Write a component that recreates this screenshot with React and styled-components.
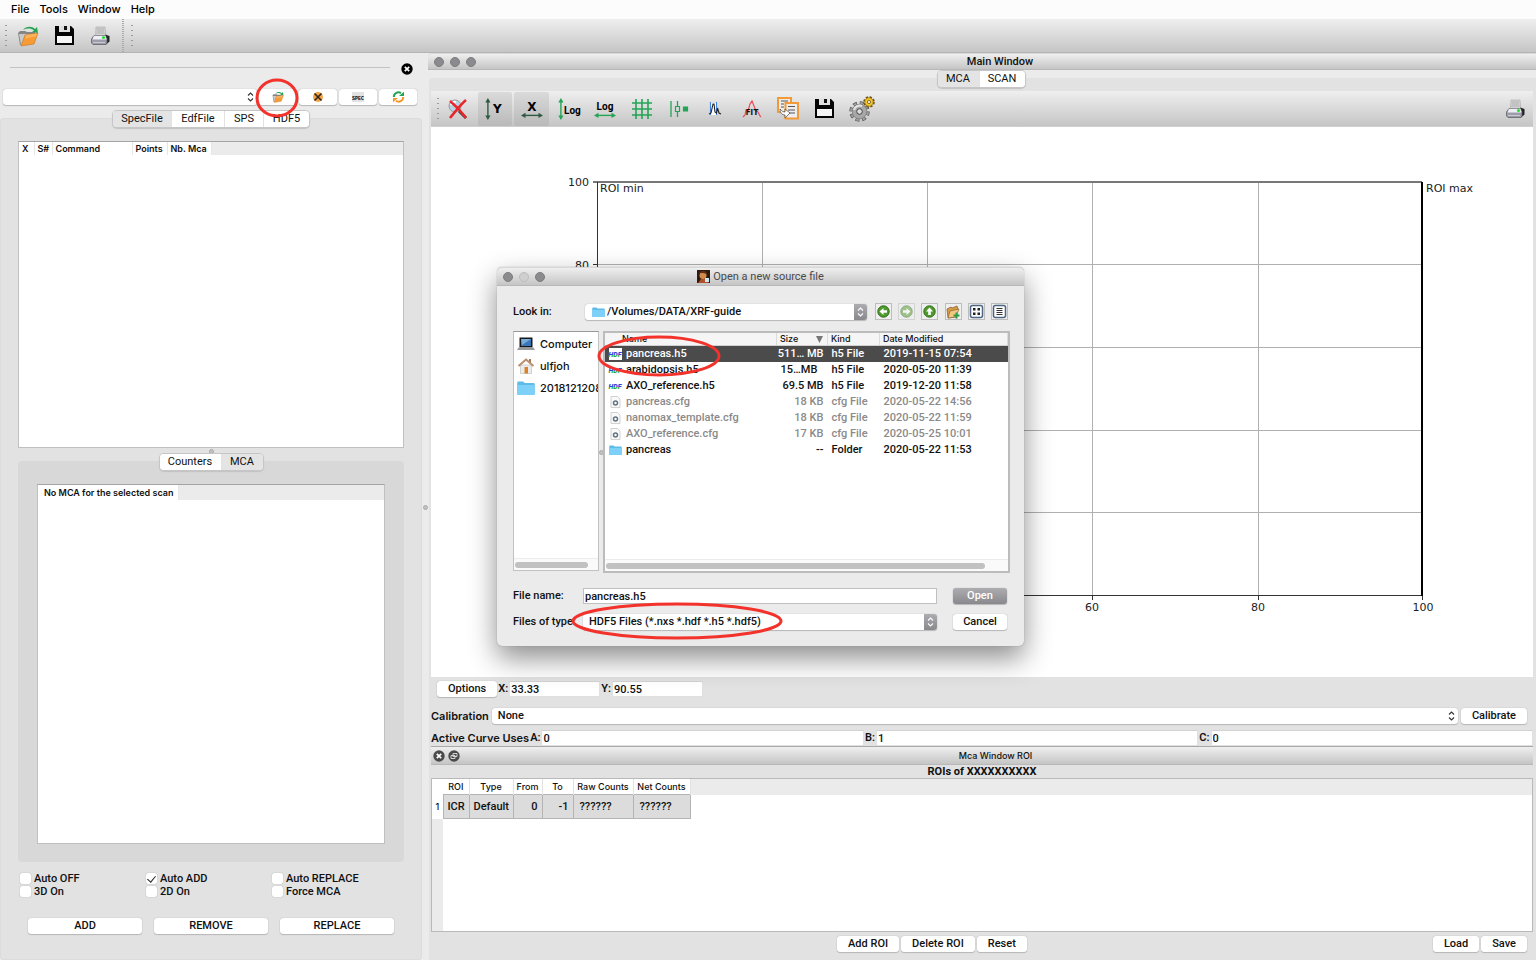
import { useState } from "react";
import styled, { createGlobalStyle, css } from "styled-components";

const GlobalStyle = createGlobalStyle`
  * {
    box-sizing: border-box;
  }
  body {
    margin: 0;
    background: #ebebeb;
    color: #111;
    font-family: Roboto, "Liberation Sans", sans-serif;
    font-size: 11px;
    font-weight: 500;
    line-height: 16px;
  }
  button, input, select {
    margin: 0;
    padding: 0;
    border: 0;
    color: inherit;
    font: inherit;
  }
  svg {
    display: block;
    flex: none;
    overflow: visible;
  }
  table {
    border-collapse: collapse;
    border-spacing: 0;
  }
`;

const wideFont = css`
  font-family: Inter, "Liberation Sans", sans-serif;
`;

const Page = styled.div`
  position: relative;
  display: flex;
  flex-direction: column;
  min-height: 100vh;
  overflow: hidden;
`;

const MenuBar = styled.nav`
  ${wideFont}
  display: flex;
  gap: 10px;
  height: 19px;
  padding: 1px 11px;
  background: #fcfcfc;
`;

const MenuLink = styled.a`
  color: #000;
  text-decoration: none;
`;

const barGradient = css`
  background: linear-gradient(#efefef, #c5c5c5);
`;

const AppToolbar = styled.div`
  ${barGradient}
  display: flex;
  align-items: center;
  height: 34px;
  padding-left: 5px;
  border-bottom: 1px solid #b4b4b4;
`;

const Grip = styled.span`
  width: 2px;
  height: 22px;
  margin-right: ${(props) => props.$gap || 0}px;
  background: repeating-linear-gradient(#999 0 1px, transparent 1px 5px);
`;

const BarEdge = styled.span`
  width: 2px;
  height: 34px;
  margin: 0 7px 0 4px;
  background: repeating-linear-gradient(#aaa 0 1px, transparent 1px 2px);
`;

const IconButton = styled.button`
  display: grid;
  place-items: center;
  width: 36px;
  height: 30px;
  background: none;
`;

const Workspace = styled.div`
  display: flex;
  flex: 1;
`;

/* ---- shared controls ---- */

const PushButton = styled.button`
  height: 16px;
  padding: 0 11px;
  border-radius: 3px;
  background: ${(props) => (props.$primary ? "linear-gradient(#adadb1, #88888d)" : "#fff")};
  color: ${(props) => (props.$primary ? "#fff" : "inherit")};
  box-shadow: 0 0 1px #999, 0 1px 1px #bbb;
  line-height: 16px;
  white-space: nowrap;
`;

const TabStrip = styled.div`
  position: relative;
  display: flex;
  align-self: center;
  height: 16px;
  margin-bottom: -9px;
  border-radius: 4px;
  background: #fff;
  box-shadow: 0 0 0 1px #c6c6c6, 0 1px 1px 1px #c2c2c2;
  overflow: hidden;
`;

const Tab = styled.button`
  width: ${(props) => props.$width}px;
  background: ${(props) => (props.$selected ? "#e4e4e4" : "#fff")};
  font-weight: 400;
  line-height: 16px;
  text-align: center;

  & + & {
    border-left: 1px solid #e2e2e2;
  }
`;

const SelectBox = styled.div`
  display: grid;
  flex: 1;
  align-items: center;
  min-width: 0;
  height: 16px;
  border-radius: 3px;
  background: #fff;
  box-shadow: 0 0 1px #999, 0 1px 1px #bbb;
  overflow: hidden;

  & > * {
    grid-area: 1 / 1;
  }
`;

const NativeSelect = styled.select`
  width: 100%;
  height: 16px;
  padding-left: ${(props) => props.$indent || 6}px;
  background: none;
  appearance: none;
  outline: none;
`;

const SelectIcon = styled.span`
  justify-self: start;
  margin-left: 7px;
  pointer-events: none;
`;

const SelectArrows = styled.span`
  display: grid;
  place-items: center;
  justify-self: end;
  width: 13px;
  height: 16px;
  background: ${(props) => (props.$solid ? "linear-gradient(#adadb1, #88888d)" : "none")};
  color: ${(props) => (props.$solid ? "#fff" : "#333")};
  pointer-events: none;
`;

const TextField = styled.input`
  flex: ${(props) => (props.$width ? "none" : 1)};
  width: ${(props) => (props.$width ? props.$width + "px" : "auto")};
  min-width: 0;
  height: 16px;
  padding: 1px 1px 0;
  border: 1px solid ${(props) => props.$border || "#e0e0e0"};
  border-top-color: ${(props) => props.$border || "#d2d2d2"};
  background: #fff;
  outline: none;
`;

/* ---- left dock ---- */

const Dock = styled.aside`
  display: flex;
  flex: 0 0 422px;
  flex-direction: column;
`;

const DockTitle = styled.div`
  display: flex;
  align-items: center;
  gap: 11px;
  height: 32px;
  padding: 0 9px 0 10px;
`;

const DockRule = styled.hr`
  flex: 1;
  height: 1px;
  margin: 0 0 3px;
  border: 0;
  background: #c4c4c4;
`;

const RoundButton = styled.button`
  border-radius: 50%;
  background: none;
`;

const SourceRow = styled.div`
  display: flex;
  gap: 2px;
  margin: 4px 5px 6px 3px;
`;

const SourceButton = styled.button`
  display: grid;
  place-items: center;
  width: 38px;
  height: 16px;
  border-radius: 3px;
  background: #fff;
  box-shadow: 0 0 1px #999, 0 1px 1px #bbb;
`;

const SourcePanel = styled.div`
  display: flex;
  flex: 1;
  flex-direction: column;
  margin-bottom: 1px;
  padding: 23px 18px 26px;
  border-radius: 4px;
  background: #e2e2e2;
  box-shadow: inset 0 0 0 1px #dcdcdc;
`;

const ListBox = styled.div`
  flex: ${(props) => props.$flex || 1};
  border: 1px solid #c0c0c0;
  border-top-color: #a4a4a4;
  background: linear-gradient(#ebebeb ${(props) => props.$head}px, #fff ${(props) => props.$head}px);
`;

const HeadTable = styled.table`
  ${wideFont}
  table-layout: fixed;
  background: #fff;
  font-size: 9px;
  font-weight: 600;
  line-height: ${(props) => props.$height}px;

  th {
    padding: 0 0 0 ${(props) => props.$indent || 3}px;
    border-right: 1px solid #e6e6e6;
    font-weight: inherit;
    text-align: left;
  }
`;

const SplitDot = styled.span`
  align-self: center;
  width: 5px;
  height: 5px;
  flex: none;
  border: 1px solid #a9a9a9;
  border-radius: 50%;
  background: #c2c2c2;
`;

const PaneHandle = styled.div`
  display: flex;
  justify-content: center;
  height: 6px;
`;

const CounterPanel = styled.div`
  display: flex;
  flex: 400 1 400px;
  padding: 23px 19px 18px;
  border-radius: 4px;
  background: #d8d8d8;
`;

const CheckGrid = styled.div`
  display: grid;
  grid-template-columns: repeat(3, 1fr);
  margin: 10px 6px 20px 2px;
  line-height: 13px;
`;

const CheckLabel = styled.label`
  display: flex;
  align-items: center;
  gap: 3px;
`;

const CheckInput = styled.input`
  display: grid;
  place-items: center;
  width: 11px;
  height: 11px;
  border-radius: 2px;
  background: #fff;
  box-shadow: 0 0 1px #888;
  appearance: none;

  &:checked::after {
    content: "";
    width: 4px;
    height: 7px;
    margin-top: -1px;
    border: solid #222;
    border-width: 0 1px 1px 0;
    transform: rotate(40deg);
  }
`;

const ActionRow = styled.div`
  display: grid;
  grid-template-columns: repeat(3, 1fr);
  gap: 12px;
  padding: 0 10px;
`;

const Splitter = styled.div`
  display: flex;
  flex: 0 0 6px;
  justify-content: center;
`;

/* ---- main window ---- */

const MainWindow = styled.main`
  display: flex;
  flex: 1;
  flex-direction: column;
  min-width: 0;
`;

const TitleBar = styled.header`
  ${barGradient}
  display: grid;
  grid-template-columns: ${(props) => (props.$dialog ? "1fr auto 1fr" : "auto 1fr")};
  align-items: center;
  height: ${(props) => (props.$dialog ? 19 : 17)}px;
  padding: 0 ${(props) => (props.$dialog ? 6 : 12)}px 0 6px;
  border-top: 1px solid #d8d8d8;
  border-bottom: 1px solid #b8b8b8;
  border-radius: ${(props) => (props.$dialog ? "5px 5px 0 0" : "4px 0 0 0")};
  text-align: center;
`;

const Lights = styled.div`
  display: flex;
  gap: 6px;
`;

const Light = styled.button`
  width: 10px;
  height: 10px;
  border-radius: 50%;
  border: 1px solid ${(props) => (props.$off ? "#bdbdbd" : "#7d7d80")};
  background: ${(props) => (props.$off ? "#cfcfcf" : "#8b8b8f")};
`;

const WindowName = styled.h1`
  margin: 0;
  font-size: 11px;
  font-weight: 500;
  line-height: 15px;
`;

const MainTabs = styled.div`
  display: flex;
  justify-content: center;
  padding: 1px 2px 0 0;
`;

const MainPanel = styled.div`
  display: flex;
  flex: 1;
  flex-direction: column;
  margin-left: 1px;
  padding: 13px 3px 9px 2px;
  border-radius: 4px 0 0 0;
  background: #e2e2e2;
`;

const PlotToolbar = styled.div`
  ${barGradient}
  display: flex;
  align-items: center;
  height: 36px;
  padding-left: 6px;
  border-bottom: 1px solid #cfcfcf;
`;

const PlotTools = styled.div`
  display: grid;
  grid-template-columns: repeat(12, 1fr);
  width: 440px;
  margin-right: auto;
`;

const PlotTool = styled.button`
  display: grid;
  place-items: center;
  height: 34px;
  margin: 0 1px;
  border-radius: 2px;
  background: ${(props) => (props.$on ? "linear-gradient(#dadada, #b9b9b9)" : "none")};
`;

const PlotArea = styled.div`
  flex: 1;
  background: #fff;

  svg {
    width: 100%;
    height: auto;
  }
`;

const FormRow = styled.div`
  display: flex;
  align-items: center;
  gap: ${(props) => props.$gap || 1}px;
  height: 16px;
  margin-top: ${(props) => props.$top}px;
  padding: 0 ${(props) => props.$right || 0}px 0 ${(props) => props.$left || 0}px;
`;

const FieldLabel = styled.label`
  font-weight: 600;
  white-space: nowrap;
`;

const StrongLabel = styled(FieldLabel)`
  ${wideFont}
`;

const RoiTitle = styled.header`
  ${barGradient}
  ${wideFont}
  display: grid;
  grid-template-columns: auto 1fr;
  align-items: center;
  height: 19px;
  border-top: 1px solid #a8a8a8;
  border-bottom: 1px solid #b8b8b8;
  padding: 0 2px;
  font-size: 9px;
  text-align: center;
`;

const RoundPair = styled.div`
  display: flex;
  gap: 3px;
`;

const RoiHeading = styled.h2`
  margin: 0;
  font-size: 11px;
  font-weight: 700;
  line-height: 13px;
  text-align: center;
`;

const RoiBox = styled.div`
  height: 154px;
  border: 1px solid #b9b9b9;
  background: linear-gradient(#ebebeb 16px, transparent 16px), linear-gradient(90deg, #ebebeb 11px, #fff 11px);
`;

const RoiTable = styled.table`
  table-layout: fixed;
  width: 258px;
  background: #fff;

  th {
    ${wideFont}
    height: 15px;
    padding: 0;
    font-size: 9px;
    font-weight: 500;
    line-height: 15px;
  }
  thead th + th {
    border-right: 1px solid #e2e2e2;
  }
  td {
    height: 24px;
    padding: 0 4px;
    border: 1px solid #b4b4b4;
    background: #dcdcdc;
  }
`;

const NumberCell = styled.td`
  && {
    text-align: right;
  }
`;

const CountCell = styled.td`
  && {
    padding-left: 6px;
  }
`;

const RoiActions = styled.div`
  display: flex;
  justify-content: space-between;
  margin-top: 4px;
  padding-right: 6px;
`;

const ButtonGroup = styled.div`
  display: flex;
  gap: 2px;
  margin: ${(props) => (props.$center ? "0 auto" : "0")};
`;

/* ---- file dialog ---- */

const Dialog = styled.section`
  position: absolute;
  top: 267px;
  left: 497px;
  width: 527px;
  border-radius: 5px;
  background: #ebebeb;
  box-shadow: 0 0 1px #777, 0 12px 28px rgba(0, 0, 0, 0.45);
`;

const DialogTitle = styled.div`
  display: flex;
  align-items: center;
  gap: 3px;
  color: #4a4a4a;
  font-weight: 400;
`;

const DialogBody = styled.div`
  padding: 17px 14px 16px 16px;
`;

const LookRow = styled.div`
  display: grid;
  grid-template-columns: 72px 282px 1fr;
  align-items: center;
  height: 17px;
`;

const NavButtons = styled.div`
  display: flex;
  justify-content: space-between;
  padding: 0 2px 0 8px;
`;

const NavButton = styled.button`
  display: grid;
  place-items: center;
  width: 17px;
  height: 17px;
  border: 1px solid #bdbdbd;
  background: #efefef;

  &:disabled {
    opacity: 0.5;
  }
`;

const Browser = styled.div`
  display: flex;
  height: 242px;
  margin: 11px 0 15px;
`;

const Places = styled.ul`
  ${wideFont}
  display: flex;
  flex-direction: column;
  width: 86px;
  height: 240px;
  margin: 0;
  padding: 1px 0 0;
  border: 1px solid #c2c2c2;
  border-top-color: #999;
  background: #fff;
  list-style: none;
  overflow: hidden;
`;

const Place = styled.li`
  display: flex;
  align-items: center;
  gap: 5px;
  height: 22px;
  padding-left: 3px;
  white-space: nowrap;
`;

const BrowserGap = styled.div`
  display: flex;
  width: 4px;
  flex: none;
  justify-content: center;
`;

const FileBox = styled.div`
  display: flex;
  flex: 1;
  flex-direction: column;
  min-width: 0;
  border: 2px solid #bcbcbc;
  background: #fff;
`;

const ScrollTrack = styled.div`
  height: 12px;
  margin-top: auto;
  padding: 3px 1px;
  border-top: 1px solid #ececec;
  background: #fafafa;
`;

const ScrollThumb = styled.div`
  width: ${(props) => props.$width}px;
  height: 6px;
  border-radius: 3px;
  background: #c1c1c1;
`;

const FileTable = styled.table`
  table-layout: fixed;
  width: 100%;

  th {
    ${wideFont}
    height: 12px;
    padding: 0 0 0 3px;
    border-right: 1px solid #dcdcdc;
    border-bottom: 1px solid #d0d0d0;
    background: #f5f5f5;
    font-size: 9px;
    font-weight: 500;
    line-height: 12px;
    text-align: left;
  }
  th:first-child {
    padding-left: 17px;
  }
  td {
    height: 16px;
    padding: 0 0 0 4px;
    line-height: 16px;
    white-space: nowrap;
  }
`;

const FileRow = styled.tr`
  background: ${(props) => (props.$selected ? "#4b4b4b" : "transparent")};
  color: ${(props) => (props.$selected ? "#fff" : props.$dim ? "#8a8a8a" : "#111")};
`;

const FileName = styled.span`
  display: flex;
  align-items: center;
  gap: 4px;
`;

const SizeHead = styled.span`
  display: flex;
  align-items: center;
  justify-content: space-between;
  padding-right: 4px;
`;

const SizeCell = styled.td`
  && {
    padding: 0 4px 0 ${(props) => (props.$left ? 4 : 0)}px;
    text-align: ${(props) => (props.$left ? "left" : "right")};
  }
`;

const DialogForm = styled.div`
  display: grid;
  grid-template-columns: 70px 354px 54px;
  align-items: center;
  gap: 10px 0;
`;

const FormControl = styled.div`
  display: flex;
`;

const DialogButton = styled(PushButton)`
  width: 54px;
  margin-left: 16px;
  padding: 0;
`;

/* hand-drawn ring laid over the controls */
const Ring = styled.svg`
  position: absolute;
  top: ${(props) => props.$top}px;
  left: ${(props) => props.$left}px;
  fill: none;
  stroke: #f2322b;
  stroke-width: 3;
  pointer-events: none;
`;

/* ---- icons ---- */

const FolderOpenIcon = ({ size = 22 }) => (
  <svg width={size} height={size} viewBox="0 0 22 22">
    <path d="M1 8l2-2h5l2 1h8v3L6 20H3z" fill="#858585" />
    <path d="M2 9h14v4l-9 7H4z" fill="#c9c9c9" />
    <path d="M8 10l13-2-4 11-13 2z" fill="#f79b35" stroke="#c7741c" strokeWidth=".6" />
    <path d="M9 10l11-1.600-1 3-11 2z" fill="#fdb25c" />
    <path d="M6 5c3-4 9-4 12-1l2-2 1 6-6-1 2-1.500C14 3 10 3 6 5z" fill="#25a456" />
  </svg>
);

const FloppyIcon = () => (
  <svg width="19" height="19" viewBox="0 0 19 19">
    <path d="M0 0h4v6h11V0h1l3 3v16H0z" fill="#050505" />
    <path d="M6 0h7v4H6z" fill="#ddd" />
    <path d="M9 0h3v4H9z" fill="#111" />
    <path d="M2 10h15v7H2z" fill="#f6f6f6" />
  </svg>
);

const PrinterIcon = () => (
  <svg width="19" height="20" viewBox="0 0 19 20">
    <path d="M5 1h9l1 9H4.500z" fill="#d2d2d2" stroke="#aaa" strokeWidth=".6" />
    <path d="M6 3h7M6 5h7M5.500 7h8" stroke="#aaa" strokeWidth=".8" />
    <path d="M14 8.500l4.500 1.500v5.500L15 18.500z" fill="#222" />
    <path d="M3 9.500h11.500l1.500 3v4.500l-1 1.500H2L.5 17v-4z" fill="#9d9daa" stroke="#55555f" strokeWidth=".7" />
    <path d="M3 9.800h11.500l1 3.700h-14z" fill="#eeeef5" />
    <path d="M2 16.500h12" stroke="#c8c8d4" />
    <circle cx="12.500" cy="11.500" r="1.600" fill="#28e038" />
  </svg>
);

const CloseIcon = ({ fill = "#000" }) => (
  <svg width="12" height="12" viewBox="0 0 12 12">
    <circle cx="6" cy="6" r="5.700" fill={fill} />
    <path d="M3.800 3.800l4.400 4.400M8.200 3.800l-4.400 4.400" stroke="#fff" strokeWidth="1.700" />
  </svg>
);

const FloatIcon = () => (
  <svg width="12" height="12" viewBox="0 0 12 12">
    <circle cx="6" cy="6" r="5.700" fill="#4a4a4a" />
    <path d="M5 3.500h4v3H5zM3 5.500h4v3H3z" fill="#4a4a4a" stroke="#ddd" strokeWidth=".9" />
  </svg>
);

const ArrowsIcon = () => (
  <svg width="7" height="10" viewBox="0 0 7 10" fill="none" stroke="currentColor" strokeWidth="1.100">
    <path d="M1 3.500L3.500 1 6 3.500M1 6.500L3.500 9 6 6.500" />
  </svg>
);

const SortIcon = () => (
  <svg width="7" height="7" viewBox="0 0 7 7" fill="#777">
    <path d="M0 0h7L3.500 7z" />
  </svg>
);

const RemoveSourceIcon = () => (
  <svg width="12" height="12" viewBox="0 0 12 12">
    <circle cx="6" cy="6" r="5" fill="#f5a243" />
    <path d="M2.500 2.500l7 7M9.500 2.500l-7 7" stroke="#33281c" strokeWidth="1.700" />
  </svg>
);

const SpecIcon = () => (
  <svg width="14" height="11" viewBox="0 0 14 11">
    <path d="M1 0h12v10H1z" fill="#e2e2e2" />
    <text x="7" y="7.500" textAnchor="middle" fontFamily="Liberation Mono, monospace" fontSize="5" fontWeight="700">SPEC</text>
  </svg>
);

const RefreshIcon = () => (
  <svg width="13" height="12" viewBox="0 0 13 12" fill="none" strokeWidth="2">
    <path d="M1.800 6A4.600 4.600 0 0 1 9 2.200" stroke="#22a455" />
    <path d="M7 5h5V.8z" fill="#22a455" />
    <path d="M11.200 6A4.600 4.600 0 0 1 4 9.800" stroke="#f5962a" />
    <path d="M6 7H1v4.200z" fill="#f5962a" />
  </svg>
);

const ZoomResetIcon = () => (
  <svg width="22" height="22" viewBox="0 0 22 22">
    <circle cx="8" cy="8" r="6" fill="#b9d3e4" stroke="#999" />
    <path d="M4 7a4 4 0 0 1 5-3" stroke="#fff" strokeWidth="2" fill="none" />
    <path d="M12 13l7 7" stroke="#444" strokeWidth="3" />
    <path d="M3 20C8 14 13 7 19 2M3 3c5 4 11 10 16 17" stroke="#e8262b" strokeWidth="2.500" fill="none" />
  </svg>
);

const VerticalArrow = ({ color }) => (
  <g fill={color}>
    <path d="M4.200 3h1.400v18H4.200z" />
    <path d="M4.900 1l2.600 4.500H2.300zM4.900 23l2.600-4.500H2.300z" />
  </g>
);

const HorizontalArrow = ({ color }) => (
  <g fill={color}>
    <path d="M4 17.700h16v1.400H4z" />
    <path d="M1 18.400l4.500-2.600V21zM23 18.400l-4.500-2.600V21z" />
  </g>
);

const YScaleIcon = () => (
  <svg width="24" height="24" viewBox="0 0 24 24">
    <VerticalArrow color="#2d5a42" />
    <text x="10" y="16" fontFamily="DejaVu Sans" fontSize="12" fontWeight="700">Y</text>
  </svg>
);

const XScaleIcon = () => (
  <svg width="24" height="24" viewBox="0 0 24 24">
    <HorizontalArrow color="#2d5a42" />
    <text x="12" y="14" textAnchor="middle" fontFamily="DejaVu Sans" fontSize="12" fontWeight="700">X</text>
  </svg>
);

const YLogIcon = () => (
  <svg width="24" height="24" viewBox="0 0 24 24">
    <VerticalArrow color="#25a456" />
    <text x="8" y="17" fontFamily="Roboto" fontSize="10" fontWeight="700">Log</text>
  </svg>
);

const XLogIcon = () => (
  <svg width="24" height="24" viewBox="0 0 24 24">
    <HorizontalArrow color="#25a456" />
    <text x="12" y="13" textAnchor="middle" fontFamily="Roboto" fontSize="10" fontWeight="700">Log</text>
  </svg>
);

const GridIcon = () => (
  <svg width="20" height="20" viewBox="0 0 20 20" stroke="#25a456" strokeWidth="1.600">
    <path d="M4 0v20M10 0v20M16 0v20M0 4h20M0 10h20M0 16h20" />
  </svg>
);

const MarkersIcon = () => (
  <svg width="20" height="18" viewBox="0 0 20 18" fill="none" stroke="#25a456">
    <path d="M3 1v16" strokeWidth="1.300" />
    <path d="M9.500 1v5M9.500 12v5" strokeWidth="1.300" />
    <path d="M7.500 6.500h4v5h-4z" strokeWidth="1.200" />
    <path d="M15.500 7h4v4h-4z" fill="#25a456" strokeWidth="1.200" />
  </svg>
);

const PeakIcon = () => (
  <svg width="14" height="14" viewBox="0 0 14 14" fill="none">
    <path d="M2.500 1h6v12h-6z" fill="#fff" />
    <path d="M2.500 0v13M8.500 0v13" stroke="#3e83e6" strokeWidth="1.100" />
    <path d="M1 12l2-1 2-9h1l1 8 1.500 1L9.500 6l1.500 5 2 1" stroke="#222" strokeWidth="1.100" />
  </svg>
);

const FitIcon = () => (
  <svg width="20" height="18" viewBox="0 0 20 18" fill="none">
    <path d="M1 17l2-2 1-5 2 1 2-7 2-3 2 5 2 5 2 1 2 4 1 1" stroke="#ee4b55" strokeWidth="1.200" />
    <text x="10" y="15" textAnchor="middle" fontFamily="Open Sans" fontSize="9" fontWeight="700" fill="#111">FIT</text>
  </svg>
);

const CopyIcon = () => (
  <svg width="22" height="23" viewBox="0 0 22 23" fill="none">
    <path d="M1 1h13v14H1z" fill="#eee" stroke="#f29a38" strokeWidth="2" />
    <path d="M8.500 6H21v15.500H8.500z" fill="#eee" stroke="#f29a38" strokeWidth="2" />
    <path d="M4 4h7M4 7h3M4 10h3M11 9.500h7M11 13h7M12 16h6" stroke="#555" strokeWidth="1.200" />
    <path d="M3 12c0 4 2 6 5 6v3l5-5-5-4v3c-2 0-3-1-5-3z" fill="#fff" stroke="#444" strokeWidth=".7" />
  </svg>
);

const GearsIcon = () => (
  <svg width="26" height="26" viewBox="0 0 26 26" fill="none">
    <circle cx="10.500" cy="15.500" r="8.200" stroke="#555" strokeWidth="4" strokeDasharray="3.800 2.640" />
    <circle cx="10.500" cy="15.500" r="8.200" stroke="#a2a2a2" strokeWidth="2.600" strokeDasharray="2.600 3.840" strokeDashoffset="-.6" />
    <circle cx="10.500" cy="15.500" r="7.300" fill="#a8a8a8" stroke="#777" strokeWidth=".7" />
    <path d="M5 14a6 6 0 0 1 8-4" stroke="#e6e6e6" strokeWidth="2" />
    <circle cx="10.500" cy="15.500" r="2.800" fill="#ddd" stroke="#444" />
    <circle cx="20" cy="6" r="4.600" stroke="#6e5410" strokeWidth="2.400" strokeDasharray="2.200 1.410" />
    <circle cx="20" cy="6" r="4.200" fill="#f6c928" stroke="#8a6a12" strokeWidth=".7" />
    <circle cx="20" cy="6" r="1.600" fill="#f0f0f0" stroke="#6e5410" strokeWidth=".8" />
  </svg>
);

const FolderIcon = ({ width = 13 }) => (
  <svg width={width} height={Math.round(width * 0.8)} viewBox="0 0 15 12">
    <path d="M0 1.500Q0 .5 1 .5h4l1.500 1.200H14q1 0 1 1V11q0 1-1 1H1q-1 0-1-1z" fill="#5fbbe8" />
    <path d="M0 3.500h15V11q0 1-1 1H1q-1 0-1-1z" fill="#7dd0f7" />
  </svg>
);

const LaptopIcon = () => (
  <svg width="18" height="14" viewBox="0 0 18 14">
    <path d="M2.500.5h13v10h-13z" fill="#16181c" />
    <path d="M4 2h10v7H4z" fill="#3b75b8" />
    <path d="M4 2h10L5 8z" fill="#79abd8" />
    <path d="M1.500 10.500h15l1.500 2.500H0z" fill="#9a9a9a" />
  </svg>
);

const HomeIcon = () => (
  <svg width="18" height="16" viewBox="0 0 18 16">
    <path d="M3.500 7h11v8.500h-11z" fill="#ececec" stroke="#bbb" strokeWidth=".6" />
    <path d="M12 1h2v4h-2z" fill="#a07a5c" />
    <path d="M1.500 8L9 1.500 16.500 8" fill="none" stroke="#b98f6c" strokeWidth="2" />
    <path d="M7.500 9h3.500v6.500H7.500z" fill="#d98226" />
  </svg>
);

const HdfIcon = () => (
  <svg width="13" height="12" viewBox="0 0 13 12">
    <defs>
      <linearGradient id="hdf" gradientUnits="userSpaceOnUse" x1="0" y1="0" x2="0" y2="12">
        <stop offset=".58" stopColor="#2a45d8" />
        <stop offset=".6" stopColor="#2ba83c" />
      </linearGradient>
    </defs>
    <path d="M0 0h13v12H0z" fill="#fff" />
    <text x="6" y="9" textAnchor="middle" fontFamily="Roboto" fontSize="7" fontWeight="900" fontStyle="italic" fill="url(#hdf)">HDF</text>
  </svg>
);

const CfgIcon = () => (
  <svg width="13" height="12" viewBox="0 0 13 12" fill="none">
    <path d="M2 .5h6.500L11 3v8.500H2z" fill="#fafafa" stroke="#c4c4c4" strokeWidth=".8" />
    <circle cx="6.500" cy="7" r="2" stroke="#627380" strokeWidth="1.500" />
  </svg>
);

const DialogIcon = () => (
  <svg width="13" height="13" viewBox="0 0 13 13">
    <path d="M0 0h13v13H0z" fill="#2e1a10" />
    <circle cx="6" cy="5.500" r="3.500" fill="#d08a4a" />
    <path d="M2 3c2-3 7-3 8 1L6 3z" fill="#5e2f14" />
    <path d="M1 13l3-4h5l3 4z" fill="#b0502a" />
    <path d="M8 8h4v4H8z" fill="#cde4f2" />
  </svg>
);

const NavArrow = ({ turn = 0 }) => (
  <svg width="13" height="13" viewBox="0 0 13 13">
    <circle cx="6.500" cy="6.500" r="5.700" fill="#4f9b2c" stroke="#2f6b17" />
    <path d="M2.500 6.500L6.500 3v2.200H10v2.600H6.500V10z" fill="#fff" transform={`rotate(${turn} 6.500 6.500)`} />
  </svg>
);

const NewFolderIcon = () => (
  <svg width="14" height="14" viewBox="0 0 14 14">
    <path d="M1 4l4-2 1 1 5-2 1 3-2 8-8 1z" fill="#d99b45" stroke="#7b5a2a" strokeWidth=".7" />
    <path d="M4 6l9-2-3 8-8 1z" fill="#f3c77f" stroke="#7b5a2a" strokeWidth=".6" />
    <path d="M10.500 7.500v6M7.500 10.500h6" stroke="#2c9d45" strokeWidth="2" />
  </svg>
);

const ViewIcon = ({ detail }) => (
  <svg width="15" height="15" viewBox="0 0 15 15" fill="none">
    <rect x="1.500" y="1.500" width="12" height="12" rx="2" fill="#fff" stroke="#4c6684" strokeWidth="1.500" />
    {detail ? (
      <path d="M4.500 4.500h6M4.500 6.500h6M4.500 8.500h6M4.500 10.500h6" stroke="#333" strokeWidth="1.100" />
    ) : (
      <path d="M4 4h2.500v2.500H4zM8.500 4H11v2.500H8.500zM4 8.500h2.500V11H4zM8.500 8.500H11V11H8.500z" fill="#222" />
    )}
  </svg>
);

/* ---- data ---- */

const plotTools = [
  { name: "Reset zoom", icon: <ZoomResetIcon /> },
  { name: "Y auto scale", icon: <YScaleIcon />, on: true },
  { name: "X auto scale", icon: <XScaleIcon />, on: true },
  { name: "Y log", icon: <YLogIcon /> },
  { name: "X log", icon: <XLogIcon /> },
  { name: "Grid", icon: <GridIcon /> },
  { name: "Markers", icon: <MarkersIcon /> },
  { name: "Peak search", icon: <PeakIcon /> },
  { name: "Fit", icon: <FitIcon /> },
  { name: "Copy", icon: <CopyIcon /> },
  { name: "Save plot", icon: <FloppyIcon /> },
  { name: "Settings", icon: <GearsIcon /> },
];

const files = [
  { name: "pancreas.h5", size: "511… MB", kind: "h5 File", date: "2019-11-15 07:54" },
  { name: "arabidopsis.h5", size: "15…MB", kind: "h5 File", date: "2020-05-20 11:39", left: true },
  { name: "AXO_reference.h5", size: "69.5 MB", kind: "h5 File", date: "2019-12-20 11:58" },
  { name: "pancreas.cfg", size: "18 KB", kind: "cfg File", date: "2020-05-22 14:56" },
  { name: "nanomax_template.cfg", size: "18 KB", kind: "cfg File", date: "2020-05-22 11:59" },
  { name: "AXO_reference.cfg", size: "17 KB", kind: "cfg File", date: "2020-05-25 10:01" },
  { name: "pancreas", size: "--", kind: "Folder", date: "2020-05-22 11:53" },
];

const fileIcons = { "h5 File": <HdfIcon />, "cfg File": <CfgIcon />, Folder: <FolderIcon /> };

const checks = ["Auto OFF", "Auto ADD", "Auto REPLACE", "3D On", "2D On", "Force MCA"];

/* ---- components ---- */

const Select = ({ label, id, options, solid, indent, icon }) => (
  <SelectBox>
    <NativeSelect id={id} aria-label={label} $indent={indent}>
      {options.map((option) => (
        <option key={option}>{option}</option>
      ))}
    </NativeSelect>
    {icon && <SelectIcon>{icon}</SelectIcon>}
    <SelectArrows $solid={solid}>
      <ArrowsIcon />
    </SelectArrows>
  </SelectBox>
);

const Tabs = ({ tabs, start }) => {
  const [selected, setSelected] = useState(start);
  return (
    <TabStrip role="tablist">
      {tabs.map(([name, width]) => (
        <Tab key={name} role="tab" aria-selected={name == selected} $width={width} $selected={name == selected} onClick={() => setSelected(name)}>
          {name}
        </Tab>
      ))}
    </TabStrip>
  );
};

const SourceDock = () => {
  const [checked, setChecked] = useState(["Auto ADD"]);

  function toggle(name) {
    setChecked(checked.includes(name) ? checked.filter((item) => item != name) : [...checked, name]);
  }

  return (
    <Dock>
      <DockTitle>
        <DockRule />
        <RoundButton aria-label="Close dock">
          <CloseIcon />
        </RoundButton>
      </DockTitle>
      <SourceRow>
        <Select label="Source" options={[""]} />
        <SourceButton aria-label="Open source">
          <FolderOpenIcon size={12} />
        </SourceButton>
        <SourceButton aria-label="Close source">
          <RemoveSourceIcon />
        </SourceButton>
        <SourceButton aria-label="Spec session">
          <SpecIcon />
        </SourceButton>
        <SourceButton aria-label="Refresh">
          <RefreshIcon />
        </SourceButton>
      </SourceRow>
      <Tabs start="SpecFile" tabs={[["SpecFile", 58], ["EdfFile", 53], ["SPS", 39], ["HDF5", 46]]} />
      <SourcePanel>
        <ListBox $flex="307 1 307px" $head={13}>
          <HeadTable $height={13}>
            <colgroup>
              <col width="15" />
              <col width="18" />
              <col width="80" />
              <col width="35" />
              <col width="44" />
            </colgroup>
            <thead>
              <tr>
                <th>X</th>
                <th>S#</th>
                <th>Command</th>
                <th>Points</th>
                <th>Nb. Mca</th>
              </tr>
            </thead>
          </HeadTable>
        </ListBox>
        <PaneHandle>
          <SplitDot />
        </PaneHandle>
        <Tabs start="MCA" tabs={[["Counters", 61], ["MCA", 42]]} />
        <CounterPanel>
          <ListBox $head={15}>
            <HeadTable $height={15} $indent={6}>
              <colgroup>
                <col width="140" />
              </colgroup>
              <thead>
                <tr>
                  <th>No MCA for the selected scan</th>
                </tr>
              </thead>
            </HeadTable>
          </ListBox>
        </CounterPanel>
        <CheckGrid>
          {checks.map((name) => (
            <CheckLabel key={name}>
              <CheckInput type="checkbox" checked={checked.includes(name)} onChange={() => toggle(name)} />
              {name}
            </CheckLabel>
          ))}
        </CheckGrid>
        <ActionRow>
          <PushButton>ADD</PushButton>
          <PushButton>REMOVE</PushButton>
          <PushButton>REPLACE</PushButton>
        </ActionRow>
      </SourcePanel>
    </Dock>
  );
};

const Plot = () => (
  <PlotArea>
    <svg viewBox="0 0 1102 550" role="img" aria-label="Empty plot">
      <path d="M331.500 55v413M496.500 55v413M661.500 55v413M827.500 55v413M166 137.500h825M166 220.500h825M166 303.500h825M166 385.500h825" stroke="#b0b0b0" fill="none" />
      <path d="M162 55h829" stroke="#777" strokeWidth="2" />
      <path d="M166.500 55v413M162 137.500h4M166 468.500h825M661.500 469v4M827.500 469v4M991.500 469v4" stroke="#333" fill="none" />
      <path d="M991 55v414" stroke="#000" strokeWidth="2" />
      <g fontFamily="DejaVu Sans" fontSize="11" fontWeight="400" fill="#222">
        <text x="158" y="59" textAnchor="end">100</text>
        <text x="158" y="142" textAnchor="end">80</text>
        <text x="169" y="65">ROI min</text>
        <text x="995" y="65">ROI max</text>
        <text x="661" y="484" textAnchor="middle">60</text>
        <text x="827" y="484" textAnchor="middle">80</text>
        <text x="992" y="484" textAnchor="middle">100</text>
      </g>
    </svg>
  </PlotArea>
);

const RoiPanel = () => (
  <>
    <RoiTitle>
      <RoundPair>
        <RoundButton aria-label="Close ROI">
          <CloseIcon fill="#4a4a4a" />
        </RoundButton>
        <RoundButton aria-label="Float ROI">
          <FloatIcon />
        </RoundButton>
      </RoundPair>
      Mca Window ROI
    </RoiTitle>
    <RoiHeading>ROIs of XXXXXXXXXX</RoiHeading>
    <RoiBox>
      <RoiTable>
        <colgroup>
          <col width="11" />
          <col width="26" />
          <col width="44" />
          <col width="29" />
          <col width="31" />
          <col width="60" />
          <col width="57" />
        </colgroup>
        <thead>
          <tr>
            <th></th>
            <th>ROI</th>
            <th>Type</th>
            <th>From</th>
            <th>To</th>
            <th>Raw Counts</th>
            <th>Net Counts</th>
          </tr>
        </thead>
        <tbody>
          <tr>
            <th>1</th>
            <td>ICR</td>
            <td>Default</td>
            <NumberCell>0</NumberCell>
            <NumberCell>-1</NumberCell>
            <CountCell>??????</CountCell>
            <CountCell>??????</CountCell>
          </tr>
        </tbody>
      </RoiTable>
    </RoiBox>
    <RoiActions>
      <ButtonGroup $center>
        <PushButton>Add ROI</PushButton>
        <PushButton>Delete ROI</PushButton>
        <PushButton>Reset</PushButton>
      </ButtonGroup>
      <ButtonGroup>
        <PushButton>Load</PushButton>
        <PushButton>Save</PushButton>
      </ButtonGroup>
    </RoiActions>
  </>
);

const FileDialog = () => {
  const [selected, setSelected] = useState("pancreas.h5");
  return (
    <Dialog role="dialog" aria-label="Open a new source file">
      <TitleBar $dialog>
        <Lights>
          <Light aria-label="Close" />
          <Light aria-label="Minimize" $off />
          <Light aria-label="Zoom" />
        </Lights>
        <DialogTitle>
          <DialogIcon />
          Open a new source file
        </DialogTitle>
      </TitleBar>
      <DialogBody>
        <LookRow>
          <label htmlFor="lookin">Look in:</label>
          <Select id="lookin" options={["/Volumes/DATA/XRF-guide"]} solid indent={22} icon={<FolderIcon />} />
          <NavButtons>
            <NavButton aria-label="Back">
              <NavArrow />
            </NavButton>
            <NavButton aria-label="Forward" disabled>
              <NavArrow turn={180} />
            </NavButton>
            <NavButton aria-label="Parent folder">
              <NavArrow turn={90} />
            </NavButton>
            <NavButton aria-label="New folder">
              <NewFolderIcon />
            </NavButton>
            <NavButton aria-label="List view">
              <ViewIcon />
            </NavButton>
            <NavButton aria-label="Detail view">
              <ViewIcon detail />
            </NavButton>
          </NavButtons>
        </LookRow>
        <Browser>
          <Places>
            <Place>
              <LaptopIcon />
              Computer
            </Place>
            <Place>
              <HomeIcon />
              ulfjoh
            </Place>
            <Place>
              <FolderIcon width={18} />
              2018121208
            </Place>
            <ScrollTrack>
              <ScrollThumb $width={73} />
            </ScrollTrack>
          </Places>
          <BrowserGap>
            <SplitDot />
          </BrowserGap>
          <FileBox>
            <FileTable>
              <colgroup>
                <col />
                <col width="51" />
                <col width="52" />
                <col width="128" />
              </colgroup>
              <thead>
                <tr>
                  <th>Name</th>
                  <th>
                    <SizeHead>
                      Size <SortIcon />
                    </SizeHead>
                  </th>
                  <th>Kind</th>
                  <th>Date Modified</th>
                </tr>
              </thead>
              <tbody>
                {files.map((file) => (
                  <FileRow key={file.name} $selected={file.name == selected} $dim={file.kind == "cfg File"} onClick={() => setSelected(file.name)}>
                    <td>
                      <FileName>
                        {fileIcons[file.kind]}
                        {file.name}
                      </FileName>
                    </td>
                    <SizeCell $left={file.left}>{file.size}</SizeCell>
                    <td>{file.kind}</td>
                    <td>{file.date}</td>
                  </FileRow>
                ))}
              </tbody>
            </FileTable>
            <ScrollTrack>
              <ScrollThumb $width={379} />
            </ScrollTrack>
          </FileBox>
        </Browser>
        <DialogForm>
          <label htmlFor="filename">File name:</label>
          <FormControl>
            <TextField id="filename" defaultValue="pancreas.h5" $border="#c0c0c0" />
          </FormControl>
          <DialogButton $primary>Open</DialogButton>
          <label htmlFor="filetype">Files of type:</label>
          <Select id="filetype" options={["HDF5 Files (*.nxs *.hdf *.h5 *.hdf5)"]} solid />
          <DialogButton>Cancel</DialogButton>
        </DialogForm>
      </DialogBody>
    </Dialog>
  );
};

export default function App() {
  return (
    <Page>
      <GlobalStyle />
      <MenuBar>
        {["File", "Tools", "Window", "Help"].map((name) => (
          <MenuLink key={name} href="#">
            {name}
          </MenuLink>
        ))}
      </MenuBar>
      <AppToolbar>
        <Grip $gap={3} />
        <IconButton aria-label="Open">
          <FolderOpenIcon />
        </IconButton>
        <IconButton aria-label="Save">
          <FloppyIcon />
        </IconButton>
        <IconButton aria-label="Print">
          <PrinterIcon />
        </IconButton>
        <BarEdge />
        <Grip />
      </AppToolbar>
      <Workspace>
        <SourceDock />
        <Splitter>
          <SplitDot />
        </Splitter>
        <MainWindow>
          <TitleBar>
            <Lights>
              <Light aria-label="Close" />
              <Light aria-label="Minimize" />
              <Light aria-label="Zoom" />
            </Lights>
            <WindowName>Main Window</WindowName>
          </TitleBar>
          <MainTabs>
            <Tabs start="MCA" tabs={[["MCA", 41], ["SCAN", 46]]} />
          </MainTabs>
          <MainPanel>
            <PlotToolbar>
              <Grip $gap={1} />
              <PlotTools>
                {plotTools.map((tool) => (
                  <PlotTool key={tool.name} aria-label={tool.name} $on={tool.on}>
                    {tool.icon}
                  </PlotTool>
                ))}
              </PlotTools>
              <IconButton aria-label="Print plot">
                <PrinterIcon />
              </IconButton>
            </PlotToolbar>
            <Plot />
            <FormRow $top={4} $left={6}>
              <PushButton>Options</PushButton>
              <FieldLabel htmlFor="x">X:</FieldLabel>
              <TextField id="x" defaultValue="33.33" $width={91} />
              <FieldLabel htmlFor="y">Y:</FieldLabel>
              <TextField id="y" defaultValue="90.55" $width={91} />
            </FormRow>
            <FormRow $top={11} $right={6} $gap={3}>
              <StrongLabel htmlFor="calibration">Calibration</StrongLabel>
              <Select id="calibration" options={["None"]} />
              <PushButton>Calibrate</PushButton>
            </FormRow>
            <FormRow $top={6}>
              <StrongLabel as="span">Active Curve Uses</StrongLabel>
              <FieldLabel htmlFor="a">A:</FieldLabel>
              <TextField id="a" defaultValue="0" />
              <FieldLabel htmlFor="b">B:</FieldLabel>
              <TextField id="b" defaultValue="1" />
              <FieldLabel htmlFor="c">C:</FieldLabel>
              <TextField id="c" defaultValue="0" />
            </FormRow>
            <RoiPanel />
          </MainPanel>
        </MainWindow>
      </Workspace>
      <FileDialog />
      <Ring width="46" height="42" $left={254} $top={77}>
        <ellipse cx="23" cy="21" rx="20" ry="18" />
      </Ring>
      <Ring width="124" height="42" $left={597} $top={335}>
        <ellipse cx="62" cy="21" rx="60" ry="19" />
      </Ring>
      <Ring width="212" height="38" $left={571} $top={602}>
        <ellipse cx="106" cy="19" rx="104" ry="17" />
      </Ring>
    </Page>
  );
}
